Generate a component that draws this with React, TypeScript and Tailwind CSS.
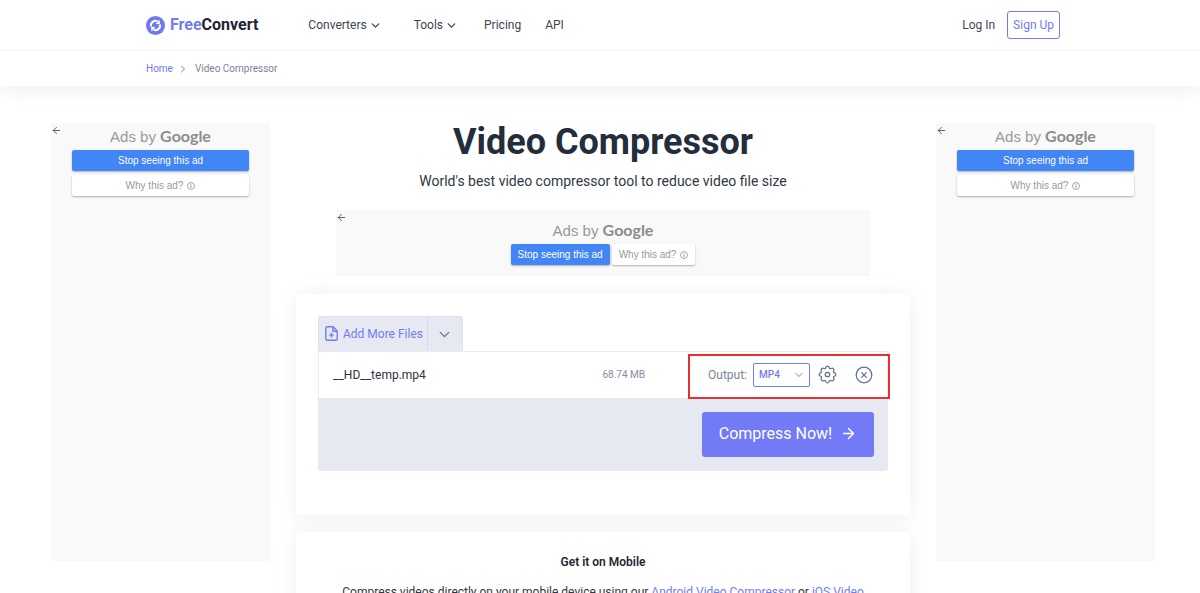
import React, { useState } from 'react';
import { ChevronDown, ChevronRight, ArrowLeft, ArrowRight } from 'lucide-react';

const FORMATS = ['MP4', 'MKV', 'MOV'];

const Logo: React.FC = () => (
  <a href="#" className="flex items-center gap-[5px]">
    <svg width="19" height="19" viewBox="0 0 19 19" fill="none" aria-hidden="true">
      <circle cx="9.5" cy="9.5" r="9.5" fill="#6e78f0" />
      <path d="M5 10.4a4.6 4.6 0 0 1 6.4-5.1" stroke="#fff" strokeWidth="2" />
      <path d="M14 8.6a4.6 4.6 0 0 1-6.4 5.1" stroke="#fff" strokeWidth="2" />
      <path d="M9.6 7.9l4.4.3-.6-4.6z" fill="#fff" />
      <path d="M9.4 11.1L5 10.8l.6 4.6z" fill="#fff" />
    </svg>
    <span className="text-[16px] leading-5 font-bold text-[#1f2533]">
      <span className="text-[#737cf0]">Free</span>Convert
    </span>
  </a>
);

const Header: React.FC = () => (
  <header className="bg-white pl-1.5 shadow-[0_2px_20px_rgba(0,0,0,0.08)]">
    <div className="mx-auto flex h-[50px] max-w-[914px] items-center justify-between">
      <div className="flex items-center">
        <Logo />
        <nav className="ml-[50px] flex items-center text-[12px] leading-4 text-[#3d4554]">
          <button className="flex items-center gap-0.5">
            Converters <ChevronDown size={13} strokeWidth={2.4} />
          </button>
          <button className="ml-8 flex items-center gap-0.5">
            Tools <ChevronDown size={13} strokeWidth={2.4} />
          </button>
          <a href="#" className="ml-[26px]">Pricing</a>
          <a href="#" className="ml-6">API</a>
        </nav>
      </div>
      <div className="flex items-center gap-3 text-[12px] leading-4 text-[#3d4554]">
        <a href="#">Log In</a>
        <a href="#" className="rounded-[3px] border border-[#737cf0] px-[5px] py-[5px] text-[#737cf0]">Sign Up</a>
      </div>
    </div>
    <div className="-ml-1.5 border-t border-[#f4f4f5] pl-1.5">
      <nav className="mx-auto flex h-[35px] max-w-[914px] items-center text-[10px] leading-4 text-[#7c8497]">
        <a href="#" className="text-[#737cf0]">Home</a>
        <ChevronRight size={12} className="mx-1" />
        <span className="ml-0.5">Video Compressor</span>
      </nav>
    </div>
  </header>
);

const InfoIcon: React.FC = () => (
  <svg width="8" height="8" viewBox="0 0 8 8" fill="none" stroke="#8f8f8f" aria-hidden="true">
    <circle cx="4" cy="4" r="3.5" strokeWidth="0.8" />
    <path d="M4 3.4v2.6M4 1.8v.9" strokeWidth="1" />
  </svg>
);

interface AdProps {
  wide?: boolean;
}

const AdPanel: React.FC<AdProps> = ({ wide }) => (
  <aside
    className={`relative bg-[#f9f9f9] font-['Liberation_Sans',Arial,sans-serif] ${
      wide ? 'mx-10 h-[66px] pt-2.5' : 'h-[438px] w-[219px] shrink-0 px-[21px] pt-[3px]'
    }`}
  >
    <button aria-label="Back" className="absolute top-0.5 left-0 text-[#555]">
      <ArrowLeft size={11} />
    </button>
    <div className="h-5 text-center text-[15px] leading-5 text-[#999]">
      Ads by <span className="font-['Lato',sans-serif] text-[16px] font-bold text-[#8c8c8c]">Google</span>
    </div>
    <div className={wide ? 'mt-1 flex justify-center gap-0.5' : 'mt-1 flex flex-col gap-1'}>
      <button className="h-[21px] rounded-[2px] bg-[#4285f4] px-[7px] text-[10px] leading-4 text-white shadow-[0_1px_2px_rgba(0,0,0,0.3)]">
        Stop seeing this ad
      </button>
      <button className="flex h-[21px] items-center justify-center gap-1 rounded-[2px] bg-white px-[7px] text-[10px] leading-4 text-[#999] shadow-[0_1px_2px_rgba(0,0,0,0.3)]">
        Why this ad? <InfoIcon />
      </button>
    </div>
  </aside>
);

const FileRow: React.FC = () => {
  const [format, setFormat] = useState(FORMATS[0]);

  return (
    <div className="relative flex h-[47px] items-center border border-b-0 border-[#ebedf4] px-3.5 pb-px">
      <span className="flex-1 text-[12px] leading-4 text-[#2b3241]">__HD__temp.mp4</span>
      <span className="text-[10px] leading-4 text-[#858ca0]">68.74 MB</span>
      <div className="ml-[63px] flex items-center">
        <label htmlFor="output" className="text-[12px] leading-4 text-[#7c8497]">Output:</label>
        <div className="relative ml-1.5">
          <select
            id="output"
            value={format}
            onChange={(e) => setFormat(e.target.value)}
            className="block h-6 w-[57px] appearance-none rounded-[2px] border border-[#737cf0] bg-white pl-[5px] text-[10px] leading-4 font-medium text-[#737cf0]"
          >
            {FORMATS.map((f) => (
              <option key={f}>{f}</option>
            ))}
          </select>
          <ChevronDown size={12} className="pointer-events-none absolute top-1.5 right-[5px] text-[#737cf0]" />
        </div>
        <button aria-label="Settings" className="ml-2 text-[#66738a]">
          <svg width="19" height="19" viewBox="0 0 24 24" fill="none" stroke="currentColor" strokeWidth="1.6" strokeLinejoin="round">
            <path d="M9.9 3.2c.6-2.2 3.6-2.2 4.2 0 .3 1.3 1.6 1.8 2.7 1.2 2-1.1 4.1 1 3 3-.6 1.1 0 2.3 1.1 2.6 2.2.6 2.2 3.5 0 4.1-1.2.3-1.7 1.6-1.1 2.7 1.1 2-1 4.1-3 3-1.1-.6-2.4-.1-2.7 1.1-.6 2.2-3.6 2.2-4.2 0-.3-1.2-1.6-1.7-2.7-1.1-2 1.1-4.1-1-3-3 .6-1.1.1-2.4-1.1-2.7-2.2-.6-2.2-3.5 0-4.1 1.2-.3 1.7-1.5 1.1-2.6-1.1-2 1-4.1 3-3 1.1.6 2.4.1 2.7-1.2z" />
            <circle cx="12" cy="12" r="2.8" />
          </svg>
        </button>
        <button aria-label="Remove" className="ml-[18px] text-[#66738a]">
          <svg width="18" height="18" viewBox="0 0 18 18" fill="none" stroke="currentColor" strokeWidth="1.3">
            <circle cx="9" cy="9" r="7.8" />
            <path d="M6.4 6.4l5.2 5.2M11.6 6.4l-5.2 5.2" />
          </svg>
        </button>
      </div>
      <div className="pointer-events-none absolute top-0.5 -right-[3px] h-[45px] w-[202px] border-2 border-[#e5322e]" />
    </div>
  );
};

const Uploader: React.FC = () => (
  <section className="rounded-[3px] bg-white px-[22px] pt-[22px] pb-11 shadow-[0_2px_22px_rgba(0,0,0,0.07)]">
    <div className="flex h-[35px] w-fit rounded-t-[3px] border border-b-0 border-[#dfe2ec] bg-[#e6e9f2] text-[#737cf0]">
      <button className="flex items-center gap-[5px] pr-1 pb-px pl-1.5 text-[12px] leading-4">
        <svg width="13" height="15" viewBox="0 0 13 15" fill="none" stroke="currentColor" strokeWidth="1.4" strokeLinejoin="round" aria-hidden="true">
          <path d="M2 .8h6.2L12.2 5v8a1.2 1.2 0 0 1-1.2 1.2H2A1.2 1.2 0 0 1 .8 13V2A1.2 1.2 0 0 1 2 .8z" />
          <path d="M8 1v4.2h4M6.5 6.8v4.6M4.2 9.1h4.6" />
        </svg>
        Add More Files
      </button>
      <button aria-label="More sources" className="flex w-[35px] items-center justify-center border-l border-[#d9dce8] text-[#66708a]">
        <ChevronDown size={17} strokeWidth={1.8} />
      </button>
    </div>
    <FileRow />
    <div className="flex justify-end rounded-b-[3px] bg-[#e6e9f2] p-3.5">
      <button className="flex h-[45px] w-[172px] items-center justify-center gap-2 rounded-[3px] bg-[#727bf5] pb-0.5 text-[16px] leading-5 text-white">
        Compress Now! <ArrowRight size={17} />
      </button>
    </div>
  </section>
);

const App: React.FC = () => {
  return (
    <div className="h-screen overflow-hidden bg-white font-['Roboto',sans-serif]">
      <Header />
      <div className="pl-1.5">
        <div className="mx-auto flex max-w-[1104px] gap-[26px] pt-[37px]">
          <AdPanel />
          <main className="min-w-0 flex-1">
            <h1 className="text-center text-[36px] leading-[38px] font-bold text-[#242d3c]">Video Compressor</h1>
            <p className="mt-2.5 mb-[19px] text-center text-[14px] leading-5 text-[#2f3746]">
              World's best video compressor tool to reduce video file size
            </p>
            <AdPanel wide />
            <div className="mt-[18px] flex flex-col gap-[17px]">
              <Uploader />
              <section className="rounded-[3px] bg-white px-10 pt-[22px] pb-6 text-center shadow-[0_2px_22px_rgba(0,0,0,0.07)]">
                <h2 className="text-[12px] leading-4 font-semibold text-[#1f2533]">Get it on Mobile</h2>
                <p className="mt-3 text-[12px] leading-5 text-[#2f3746]">
                  Compress videos directly on your mobile device using our{' '}
                  <a href="#" className="text-[#737cf0]">Android Video Compressor</a> or{' '}
                  <a href="#" className="text-[#737cf0]">iOS Video</a>
                </p>
              </section>
            </div>
          </main>
          <AdPanel />
        </div>
      </div>
    </div>
  );
};

export default App;
